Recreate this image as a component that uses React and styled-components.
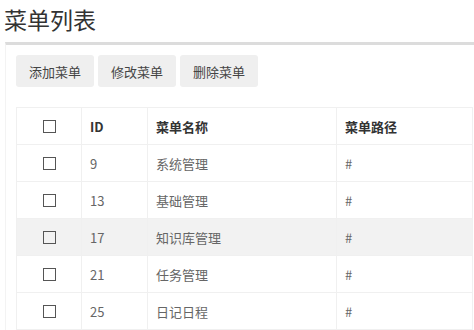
import React from 'react';
import styled, { createGlobalStyle } from 'styled-components';

const GlobalStyle = createGlobalStyle`
  body {
    margin: 0;
    background: #fff;
    font-family: "Noto Sans CJK SC", "Noto Sans", sans-serif;
    color: #666;
    overflow: hidden;
  }
`;

const Title = styled.h1`
  margin: 0;
  padding: 3px 0 0 4px;
  height: 42px;
  box-sizing: border-box;
  font-size: 23px;
  line-height: 32px;
  font-weight: normal;
  color: #333;
`;

const Panel = styled.div`
  margin-left: 5px;
  border-top: 3px solid #dcdcdc;
  border-left: 1px solid #f3f3f3;
  padding: 10px 0 0 10px;
  height: 300px;
`;

const Toolbar = styled.div`
  display: flex;
  gap: 4px;
`;

const Button = styled.button`
  height: 32px;
  width: 78px;
  padding: 0;
  border: none;
  border-radius: 3px;
  background: #efefef;
  color: #444;
  font-family: inherit;
  font-size: 13px;
`;

const Table = styled.table`
  margin-top: 20px;
  width: 456px;
  border-collapse: collapse;
  table-layout: fixed;
  font-size: 13px;
`;

const Row = styled.tr`
  background: ${props => props.$hover ? '#f2f2f2' : '#fff'};
`;

const Cell = styled.td`
  height: 36px;
  padding: 0 8px;
  border: 1px solid #f0f0f0;
  color: ${props => props.$head ? '#333' : '#666'};
  font-weight: ${props => props.$head ? 'bold' : 'normal'};
  text-align: ${props => props.$center ? 'center' : 'left'};
  white-space: nowrap;
  overflow: hidden;
`;

const Check = styled.span`
  display: inline-block;
  width: 11px;
  height: 11px;
  border: 1px solid #555;
  vertical-align: middle;
  margin-top: -3px;
`;

const rows = [
  { id: 9, name: '系统管理', path: '#' },
  { id: 13, name: '基础管理', path: '#' },
  { id: 17, name: '知识库管理', path: '#', hover: true },
  { id: 21, name: '任务管理', path: '#' },
  { id: 25, name: '日记日程', path: '#' },
];

const App = () => {
  return (
    <>
      <GlobalStyle />
      <Title>菜单列表</Title>
      <Panel>
        <Toolbar>
          <Button>添加菜单</Button>
          <Button>修改菜单</Button>
          <Button>删除菜单</Button>
        </Toolbar>
        <Table>
          <colgroup>
            <col style={{ width: 65 }} />
            <col style={{ width: 66 }} />
            <col style={{ width: 189 }} />
            <col style={{ width: 136 }} />
          </colgroup>
          <tbody>
            <Row>
              <Cell $head $center><Check /></Cell>
              <Cell $head>ID</Cell>
              <Cell $head>菜单名称</Cell>
              <Cell $head>菜单路径</Cell>
            </Row>
            {rows.map(r => (
              <Row key={r.id} $hover={r.hover}>
                <Cell $center><Check /></Cell>
                <Cell>{r.id}</Cell>
                <Cell>{r.name}</Cell>
                <Cell>{r.path}</Cell>
              </Row>
            ))}
          </tbody>
        </Table>
      </Panel>
    </>
  );
};

export default App;
